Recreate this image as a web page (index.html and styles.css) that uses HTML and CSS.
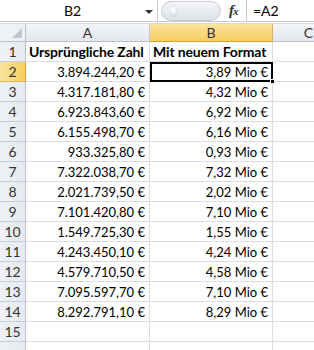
FILE: index.html
```html
<!DOCTYPE html>
<html>
<head>
<meta charset="utf-8">
<link rel="stylesheet" href="styles.css">
</head>
<body>
<div class="app">
  <div class="fbar">
    <div class="namebox"><span class="nb-text">B2</span><span class="nb-arrow"></span></div>
    <div class="mid">
      <div class="capsule"><span class="cap-dot"></span></div>
      <span class="fx">f<span class="fx-x">x</span></span>
    </div>
    <div class="formula">=A2</div>
  </div>
  <div class="sep"></div>
  <div class="grid">
    <div class="corner"><span class="tri"></span></div>
    <div class="ch">A</div>
    <div class="ch sel">B</div>
    <div class="ch">C</div>

    <div class="rh">1</div><div class="c bold">Ursprüngliche Zahl</div><div class="c bold">Mit neuem Format</div><div class="c"></div>
    <div class="rh sel">2</div><div class="c num">3.894.244,20 €</div><div class="c num active">3,89 Mio €<span class="handle"></span></div><div class="c"></div>
    <div class="rh">3</div><div class="c num">4.317.181,80 €</div><div class="c num">4,32 Mio €</div><div class="c"></div>
    <div class="rh">4</div><div class="c num">6.923.843,60 €</div><div class="c num">6,92 Mio €</div><div class="c"></div>
    <div class="rh">5</div><div class="c num">6.155.498,70 €</div><div class="c num">6,16 Mio €</div><div class="c"></div>
    <div class="rh">6</div><div class="c num">933.325,80 €</div><div class="c num">0,93 Mio €</div><div class="c"></div>
    <div class="rh">7</div><div class="c num">7.322.038,70 €</div><div class="c num">7,32 Mio €</div><div class="c"></div>
    <div class="rh">8</div><div class="c num">2.021.739,50 €</div><div class="c num">2,02 Mio €</div><div class="c"></div>
    <div class="rh">9</div><div class="c num">7.101.420,80 €</div><div class="c num">7,10 Mio €</div><div class="c"></div>
    <div class="rh">10</div><div class="c num">1.549.725,30 €</div><div class="c num">1,55 Mio €</div><div class="c"></div>
    <div class="rh">11</div><div class="c num">4.243.450,10 €</div><div class="c num">4,24 Mio €</div><div class="c"></div>
    <div class="rh">12</div><div class="c num">4.579.710,50 €</div><div class="c num">4,58 Mio €</div><div class="c"></div>
    <div class="rh">13</div><div class="c num">7.095.597,70 €</div><div class="c num">7,10 Mio €</div><div class="c"></div>
    <div class="rh">14</div><div class="c num">8.292.791,10 €</div><div class="c num">8,29 Mio €</div><div class="c"></div>
    <div class="rh">15</div><div class="c"></div><div class="c"></div><div class="c"></div>
    <div class="rh"></div><div class="c"></div><div class="c"></div><div class="c"></div>
  </div>
</div>
</body>
</html>
```
FILE: styles.css
```css
* { box-sizing: border-box; }
html, body { margin: 0; padding: 0; background: #fff; }
body { font-family: Lato, "Liberation Sans", sans-serif; color: #000; }
.app { width: 314px; height: 350px; overflow: hidden; background: #fff; }

.fbar { display: flex; height: 22px; border-bottom: 1px solid #c5cbd3; background: #dfe4ea; }
.namebox { width: 158px; flex: none; background: #fff; border-right: 1px solid #c5cbd3; position: relative; display: flex; align-items: center; justify-content: center; }
.nb-text { font-size: 14px; margin-left: -12px; }
.nb-arrow { position: absolute; right: 4px; top: 10px; width: 0; height: 0; border-left: 4px solid transparent; border-right: 4px solid transparent; border-top: 4px solid #333; }
.mid { width: 89px; flex: none; display: flex; align-items: center; padding-left: 3px; background: #fff; border-right: 1px solid #c5cbd3; }
.capsule { width: 60px; height: 20px; border-radius: 10px; background: linear-gradient(#f4f5f7, #dde1e6); border: 1px solid #c8ccd2; position: relative; }
.cap-dot { position: absolute; left: 7px; top: 3px; width: 9px; height: 12px; border-radius: 50%; background: radial-gradient(circle at 45% 40%, #ffffff, #c9ced5); }
.fx { font-family: "Liberation Serif", serif; font-style: italic; font-weight: bold; font-size: 15px; color: #333; margin-left: 8px; letter-spacing: -1px; }
.fx-x { font-size: 11px; }
.formula { flex: 1; background: #fff; font-size: 14px; display: flex; align-items: center; padding-left: 6px; }

.sep { height: 2px; background: #fff; border-bottom: 1px solid #d3d8df; }

.grid { display: grid; grid-template-columns: 26px 124px 123px 72px; grid-template-rows: 18px repeat(16, 20px); }
.corner { background: #eef1f5; border-right: 1px solid #b9c0c9; border-bottom: 1px solid #b9c0c9; position: relative; }
.tri { position: absolute; right: 3px; bottom: 3px; width: 0; height: 0; border-left: 10px solid transparent; border-bottom: 10px solid #bfc5cc; }
.ch { background: linear-gradient(#f3f5f8, #e4e8ee); border-right: 1px solid #c2c8d0; border-bottom: 1px solid #b9c0c9; font-size: 14px; color: #333; display: flex; align-items: center; justify-content: center; }
.ch.sel { background: linear-gradient(#fbe3a0, #f7cf5e); border-right-color: #d7b55a; border-bottom-color: #d9a43c; }
.rh { background: linear-gradient(90deg, #eef1f5, #e6eaf0); border-right: 1px solid #b9c0c9; border-bottom: 1px solid #c9ced6; font-size: 14px; color: #333; display: flex; align-items: center; justify-content: center; }
.rh.sel { background: linear-gradient(90deg, #fbe3a0, #f7cf5e); border-right-color: #d9a43c; border-bottom-color: #d7b55a; }
.c { border-right: 1px solid #dadcdd; border-bottom: 1px solid #dadcdd; font-size: 13px; display: flex; align-items: center; padding: 0 4px 0 3px; white-space: nowrap; overflow: visible; }
.bold { font-weight: bold; font-size: 14px; letter-spacing: -0.15px; }
.num { justify-content: flex-end; }
.active { position: relative; outline: 2px solid #000; outline-offset: -2px; z-index: 1; }
.handle { position: absolute; right: -3px; bottom: -3px; width: 5px; height: 5px; background: #000; border: 1px solid #fff; }
```
